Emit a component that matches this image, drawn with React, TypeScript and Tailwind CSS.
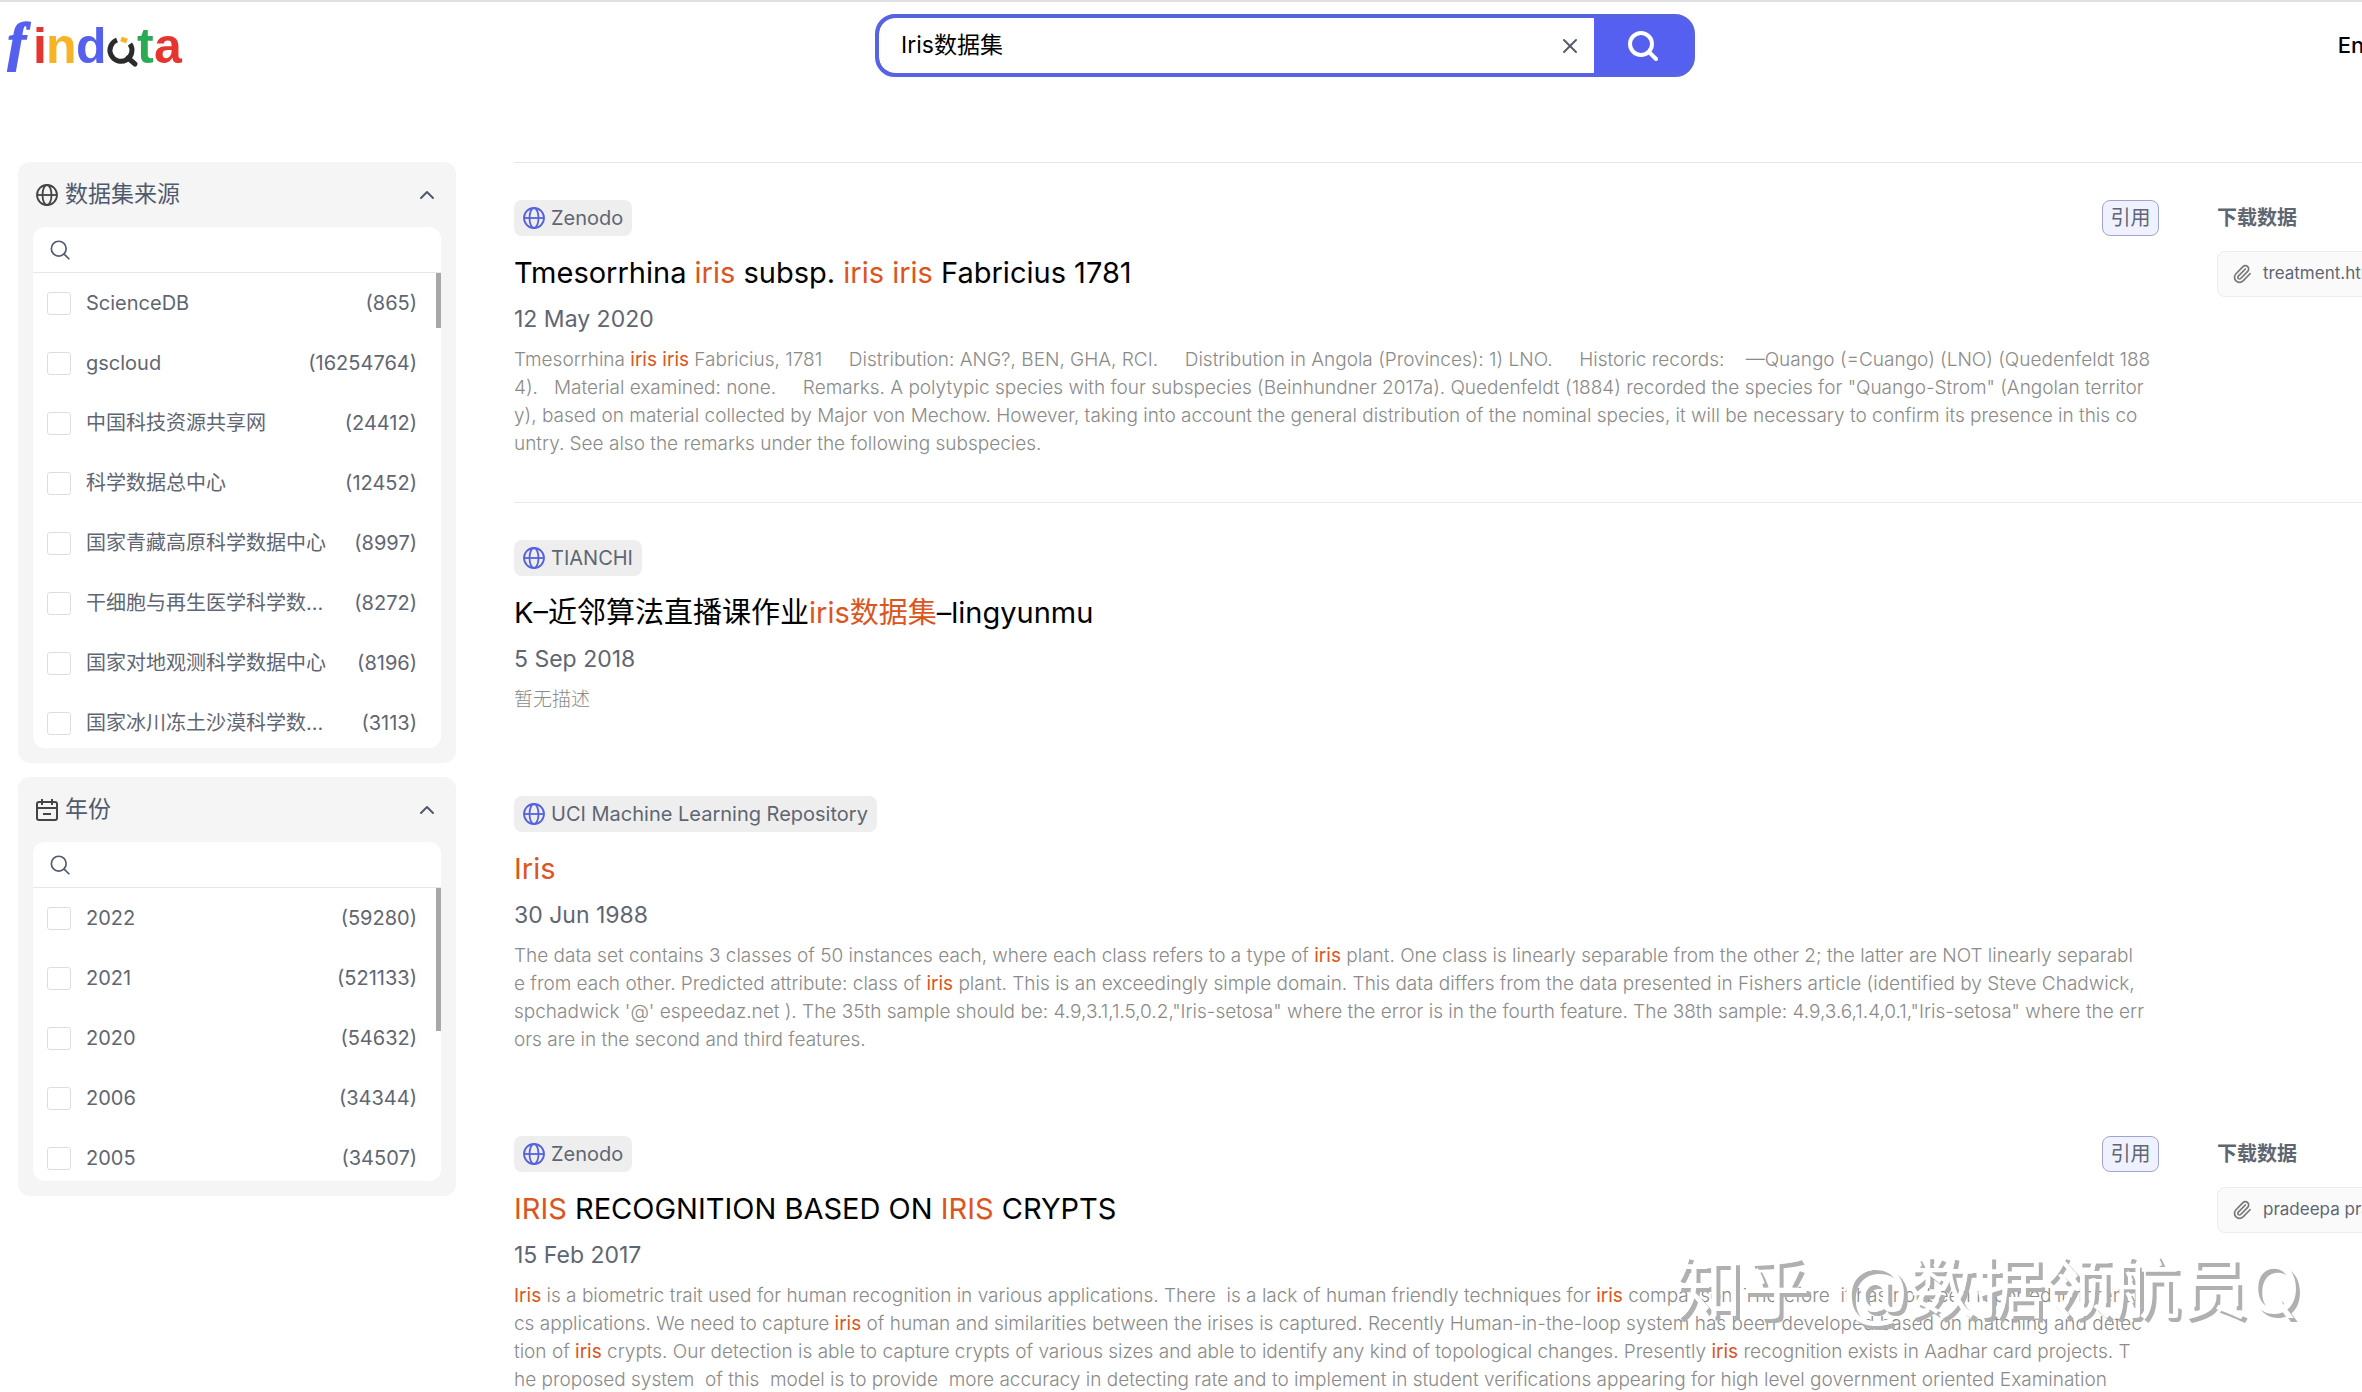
import React, { useState } from 'react';
import { ChevronUp, Paperclip, X } from 'lucide-react';

interface FacetItem {
  name: string;
  count: number;
}

interface Dataset {
  id: number;
  source: string;
  title: string;
  date: string;
  // one entry per line, [..] marks a keyword hit
  description: string[];
  file?: string;
  divider?: boolean;
}

const SOURCES: FacetItem[] = [
  { name: 'ScienceDB', count: 865 },
  { name: 'gscloud', count: 16254764 },
  { name: '中国科技资源共享网', count: 24412 },
  { name: '科学数据总中心', count: 12452 },
  { name: '国家青藏高原科学数据中心', count: 8997 },
  { name: '干细胞与再生医学科学数...', count: 8272 },
  { name: '国家对地观测科学数据中心', count: 8196 },
  { name: '国家冰川冻土沙漠科学数...', count: 3113 },
];

const YEARS: FacetItem[] = [
  { name: '2022', count: 59280 },
  { name: '2021', count: 521133 },
  { name: '2020', count: 54632 },
  { name: '2006', count: 34344 },
  { name: '2005', count: 34507 },
];

const DATASETS: Dataset[] = [
  {
    id: 1,
    source: 'Zenodo',
    title: 'Tmesorrhina [iris] subsp. [iris] [iris] Fabricius 1781',
    date: '12 May 2020',
    description: [
      'Tmesorrhina [iris] [iris] Fabricius, 1781     Distribution: ANG?, BEN, GHA, RCI.     Distribution in Angola (Provinces): 1) LNO.     Historic records:    —Quango (=Cuango) (LNO) (Quedenfeldt 188',
      '4).   Material examined: none.     Remarks. A polytypic species with four subspecies (Beinhundner 2017a). Quedenfeldt (1884) recorded the species for "Quango-Strom" (Angolan territor',
      'y), based on material collected by Major von Mechow. However, taking into account the general distribution of the nominal species, it will be necessary to confirm its presence in this co',
      'untry. See also the remarks under the following subspecies.',
    ],
    file: 'treatment.html',
    divider: true,
  },
  {
    id: 2,
    source: 'TIANCHI',
    title: 'K–近邻算法直播课作业[iris数据集]–lingyunmu',
    date: '5 Sep 2018',
    description: ['暂无描述'],
    divider: true,
  },
  {
    id: 3,
    source: 'UCI Machine Learning Repository',
    title: '[Iris]',
    date: '30 Jun 1988',
    description: [
      'The data set contains 3 classes of 50 instances each, where each class refers to a type of [iris] plant. One class is linearly separable from the other 2; the latter are NOT linearly separabl',
      'e from each other. Predicted attribute: class of [iris] plant. This is an exceedingly simple domain. This data differs from the data presented in Fishers article (identified by Steve Chadwick,',
      'spchadwick \'@\' espeedaz.net ). The 35th sample should be: 4.9,3.1,1.5,0.2,"Iris-setosa" where the error is in the fourth feature. The 38th sample: 4.9,3.6,1.4,0.1,"Iris-setosa" where the err',
      'ors are in the second and third features.',
    ],
  },
  {
    id: 4,
    source: 'Zenodo',
    title: '[IRIS] RECOGNITION BASED ON [IRIS] CRYPTS',
    date: '15 Feb 2017',
    description: [
      '[Iris] is a biometric trait used for human recognition in various applications. There  is a lack of human friendly techniques for [iris] comparison. Therefore  it has not been reported in forensi',
      'cs applications. We need to capture [iris] of human and similarities between the irises is captured. Recently Human-in-the-loop system has been developed based on matching and detec',
      'tion of [iris] crypts. Our detection is able to capture crypts of various sizes and able to identify any kind of topological changes. Presently [iris] recognition exists in Aadhar card projects. T',
      'he proposed system  of this  model is to provide  more accuracy in detecting rate and to implement in student verifications appearing for high level government oriented Examination',
    ],
    file: 'pradeepa pra',
  },
];

const Logo = () => (
  <svg width="190" height="63" viewBox="0 14 190 63" role="img" aria-label="findata">
    <text x="8" y="60" fontSize="53" fontWeight="700" fontStyle="italic" fill="#5560ee" stroke="#5560ee" strokeWidth="2" fontFamily="Liberation Serif, serif">f</text>
    <g fontSize="50" fontWeight="700" fontFamily="Liberation Sans, sans-serif">
      <text x="33" y="63" fill="#e6352f">i</text>
      <text x="46" y="63" fill="#f8b226">n</text>
      <text x="76" y="63" fill="#5560ee">d</text>
      <text x="137" y="63" fill="#2aab53">t</text>
      <text x="154" y="63" fill="#e6352f">a</text>
    </g>
    <g fill="none" strokeWidth="5">
      <path d="M117 40A11 11 0 1 0 130 44" stroke="#2b2b2b" />
      <path d="M121 39L127 41" stroke="#f8b226" />
      <path d="M128 58L135 64" stroke="#2b2b2b" strokeLinecap="round" />
    </g>
  </svg>
);

const GlobeIcon = ({ className }: { className: string }) => (
  <svg className={className} viewBox="0 0 22 22" fill="none" stroke="currentColor" strokeWidth="1.8">
    <circle cx="11" cy="11" r="10" />
    <ellipse cx="11" cy="11" rx="4.5" ry="10" />
    <path d="M1 11H21" />
  </svg>
);

const CalendarIcon = () => (
  <svg className="h-[22px] w-[22px] text-[#444]" viewBox="0 0 22 22" fill="none" stroke="currentColor" strokeWidth="2">
    <rect x="1" y="3" width="20" height="18" rx="2" />
    <path d="M1 9H21M6 0V6M16 0V6M7 15H15" />
  </svg>
);

const SearchIcon = ({ className, weight }: { className: string; weight: number }) => (
  <svg className={className} viewBox="0 0 30 30" fill="none" stroke="currentColor" strokeWidth={weight} strokeLinecap="round">
    <circle cx="13" cy="13" r="11" />
    <path d="M21 21L28 28" />
  </svg>
);

const Highlight = ({ text }: { text: string }) => (
  <>
    {text.split(/\[(.+?)\]/).map((part, i) =>
      i % 2 ? <em key={i} className="font-normal not-italic text-[#dc5520]">{part}</em> : part
    )}
  </>
);

interface FacetPanelProps {
  title: string;
  icon: React.ReactNode;
  items: FacetItem[];
  listClass: string;
  thumbClass: string;
}

const FacetPanel: React.FC<FacetPanelProps> = ({ title, icon, items, listClass, thumbClass }) => (
  <section className="rounded-xl bg-[#f5f5f5] px-[15px] pb-[15px]">
    <button className="flex h-[65px] w-full items-center gap-[7px] pl-[3px] pr-0.5 text-[23px] text-[#515a6e]">
      {icon}
      <span>{title}</span>
      <ChevronUp className="ml-auto h-6 w-6 text-[#515a6e]" strokeWidth={2} />
    </button>
    <div className="overflow-hidden rounded-xl bg-white">
      <label className="flex h-[46px] items-center border-b border-[#e8e8e8] pl-[17px]">
        <SearchIcon className="h-[22px] w-[22px] text-[#515a6e]" weight={2.5} />
        <input aria-label={title} className="ml-3 w-full outline-none" />
      </label>
      <div className={`relative overflow-hidden ${listClass}`}>
        {items.map((item) => (
          <label key={item.name} className="flex h-[60px] items-center pl-3.5 pr-6 text-[20px] text-[#5f6673]">
            <input type="checkbox" className="h-[23px] w-6 appearance-none rounded-[3px] border border-[#dcdee2] bg-white" />
            <span className="ml-[15px]">{item.name}</span>
            <span className="ml-auto">({item.count})</span>
          </label>
        ))}
        <div className={`absolute right-0 top-0 w-[5px] bg-[#a8a8a8] ${thumbClass}`} />
      </div>
    </div>
  </section>
);

const DatasetRow = ({ item }: { item: Dataset }) => (
  <article className={`flex gap-[58px] border-t pb-11 pt-[37px] ${item.divider ? 'border-[#e8e8e8]' : 'border-transparent'}`}>
    <div className="min-w-0 flex-1">
      <div className="flex items-center justify-between">
        <a href="#" className="flex h-9 items-center gap-1.5 rounded-lg bg-[#eeeeee] px-[9px] text-[20px] text-[#5f6673]">
          <GlobeIcon className="h-[22px] w-[22px] text-[#5560e0]" />
          {item.source}
        </a>
        {item.file && (
          <button className="h-9 w-[57px] rounded-lg border border-[#9fa3d4] bg-[#f0f1ff] text-[20px] leading-8 text-[#5f6673]">引用</button>
        )}
      </div>
      <h2 className="mt-[17px] text-[29px] leading-10 text-black">
        <a href="#"><Highlight text={item.title} /></a>
      </h2>
      <p className="mt-2.5 text-[23px] leading-8 text-[#5f6673]">{item.date}</p>
      <p className="mt-[11px] whitespace-pre text-[19px] font-light leading-7 text-[#8a8a8a]">
        {item.description.map((line) => (
          <span key={line} className="block"><Highlight text={line} /></span>
        ))}
      </p>
    </div>
    <div className="w-[353px]">
      {item.file && (
        <>
          <h3 className="text-[20px] font-bold leading-9 text-[#5f6673]">下载数据</h3>
          <a href="#" className="mt-[15px] flex h-[46px] items-center gap-[11px] rounded-lg border border-[#ececec] bg-[#fafafa] pl-3.5 text-[17px] text-[#5f6673]">
            <Paperclip className="h-5 w-5 text-[#777]" strokeWidth={2} />
            {item.file}
          </a>
        </>
      )}
    </div>
  </article>
);

const App: React.FC = () => {
  const [query, setQuery] = useState('Iris数据集');

  return (
    <div className="relative h-screen overflow-hidden bg-white font-['Inter','Noto_Sans_CJK_SC',sans-serif]">
      <div className="-mr-52 border-t-2 border-[#e0e0e0] pt-3">
        <header className="flex items-center">
          <div className="flex-1"><Logo /></div>
          <form className="flex h-[63px] w-[820px] overflow-hidden rounded-[20px] border-4 border-[#5762e6] bg-[#5560f0]" onSubmit={(e) => e.preventDefault()}>
            <div className="flex flex-1 items-center rounded-l-2xl bg-white pl-[22px] pr-3">
              <input
                aria-label="搜索数据集"
                value={query}
                onChange={(e) => setQuery(e.target.value)}
                className="flex-1 text-[23px] text-black outline-none"
              />
              <button type="button" aria-label="清空" onClick={() => setQuery('')}>
                <X className="h-6 w-6 text-[#555b66]" strokeWidth={2} />
              </button>
            </div>
            <button type="submit" aria-label="搜索" className="flex w-[97px] items-center justify-center text-white">
              <SearchIcon className="h-[30px] w-[30px]" weight={4} />
            </button>
          </form>
          <div className="flex flex-1 justify-end">
            <button className="mr-[156px] text-[22px] font-medium text-black">English</button>
          </div>
        </header>

        <div className="mt-[85px] flex items-start gap-[58px] pl-[18px]">
          <aside className="flex w-[438px] flex-col gap-3.5">
            <FacetPanel
              title="数据集来源"
              icon={<GlobeIcon className="h-[22px] w-[22px] text-[#444]" />}
              items={SOURCES}
              listClass="h-[475px]"
              thumbClass="h-[55px]"
            />
            <FacetPanel
              title="年份"
              icon={<CalendarIcon />}
              items={YEARS}
              listClass="h-[293px]"
              thumbClass="h-[143px]"
            />
          </aside>
          <main className="min-w-0 flex-1">
            {DATASETS.map((item) => <DatasetRow key={item.id} item={item} />)}
          </main>
        </div>
      </div>

      <div className="pointer-events-none absolute bottom-[54px] right-[62px] flex gap-8 whitespace-pre text-[68px] leading-[100px] text-white [text-shadow:4px_4px_0_#b0b0b0]">
        <span>知乎</span>
        <span>@数据领航员Q</span>
      </div>
    </div>
  );
};

export default App;
